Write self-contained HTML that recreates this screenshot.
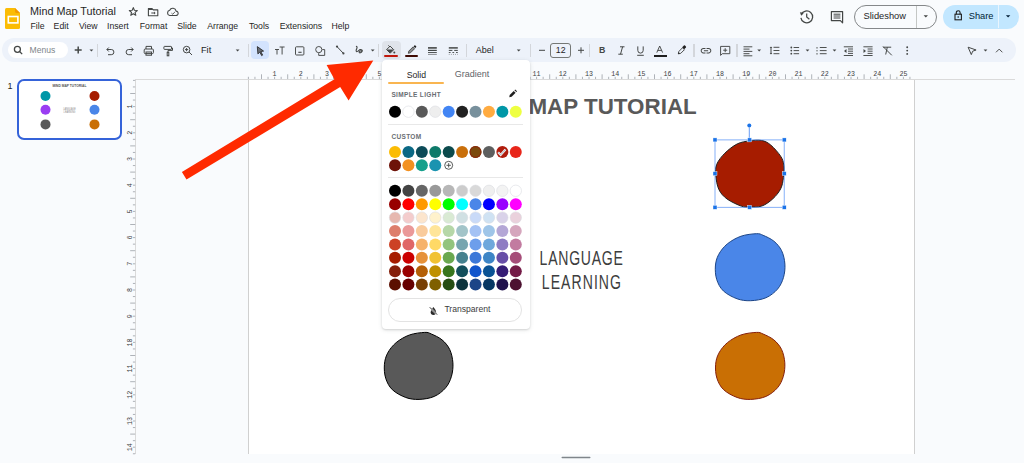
<!DOCTYPE html>
<html><head><meta charset="utf-8"><style>
html,body{margin:0;padding:0;}
body{width:1024px;height:463px;overflow:hidden;position:relative;background:#f9fbfd;font-family:"Liberation Sans", sans-serif;}
.t{position:absolute;white-space:nowrap;}
.ov{position:absolute;left:0;top:0;}
div{position:absolute;}
</style></head><body>
<div class="t" style="left:30.00px;top:5.56px;font-size:10.8px;line-height:10.8px;color:#1f1f1f;font-weight:normal;">Mind Map Tutorial</div>
<div class="t" style="left:30.50px;top:21.94px;font-size:8.7px;line-height:8.7px;color:#1f1f1f;font-weight:normal;">File</div>
<div class="t" style="left:53.60px;top:21.94px;font-size:8.7px;line-height:8.7px;color:#1f1f1f;font-weight:normal;">Edit</div>
<div class="t" style="left:78.90px;top:21.94px;font-size:8.7px;line-height:8.7px;color:#1f1f1f;font-weight:normal;">View</div>
<div class="t" style="left:107.00px;top:21.94px;font-size:8.7px;line-height:8.7px;color:#1f1f1f;font-weight:normal;">Insert</div>
<div class="t" style="left:139.80px;top:21.94px;font-size:8.7px;line-height:8.7px;color:#1f1f1f;font-weight:normal;">Format</div>
<div class="t" style="left:177.30px;top:21.94px;font-size:8.7px;line-height:8.7px;color:#1f1f1f;font-weight:normal;">Slide</div>
<div class="t" style="left:207.20px;top:21.94px;font-size:8.7px;line-height:8.7px;color:#1f1f1f;font-weight:normal;">Arrange</div>
<div class="t" style="left:248.90px;top:21.94px;font-size:8.7px;line-height:8.7px;color:#1f1f1f;font-weight:normal;">Tools</div>
<div class="t" style="left:279.70px;top:21.94px;font-size:8.7px;line-height:8.7px;color:#1f1f1f;font-weight:normal;">Extensions</div>
<div class="t" style="left:331.50px;top:21.94px;font-size:8.7px;line-height:8.7px;color:#1f1f1f;font-weight:normal;">Help</div>
<div style="position:absolute;left:853.8px;top:4.8px;width:83.2px;height:23.8px;border:1px solid #85888a;border-radius:12.5px;box-sizing:border-box"></div>
<div style="position:absolute;left:915.80px;top:5.50px;width:1.00px;height:22.80px;background:#c4c7c5"></div>
<div class="t" style="left:863.60px;top:11.93px;font-size:9.3px;line-height:9.3px;color:#1f1f1f;font-weight:normal;">Slideshow</div>
<div style="position:absolute;left:942.6px;top:4.8px;width:76px;height:24px;background:#c2e7ff;border-radius:12.5px"></div>
<div style="position:absolute;left:997.80px;top:5.00px;width:1.00px;height:23.20px;background:#f9fbfd;opacity:.7"></div>
<div class="t" style="left:968.70px;top:11.93px;font-size:9.3px;line-height:9.3px;color:#001d35;font-weight:normal;">Share</div>
<div style="position:absolute;left:2px;top:38px;width:1014px;height:24px;background:#edf2fa;border-radius:12px"></div>
<div style="position:absolute;left:7.8px;top:42px;width:60.5px;height:16px;background:#fff;border-radius:8px"></div>
<div class="t" style="left:29.50px;top:46.12px;font-size:8.6px;line-height:8.6px;color:#80868b;font-weight:normal;">Menus</div>
<div style="position:absolute;left:96.90px;top:43.50px;width:1.20px;height:13.00px;background:#d3d6db"></div>
<div class="t" style="left:201.00px;top:45.71px;font-size:9.2px;line-height:9.2px;color:#1f1f1f;font-weight:normal;">Fit</div>
<div style="position:absolute;left:247.70px;top:43.50px;width:1.20px;height:13.00px;background:#d3d6db"></div>
<div style="position:absolute;left:251.4px;top:41.2px;width:17.8px;height:18px;background:#d3e3fd;border-radius:4px"></div>
<div style="position:absolute;left:378.20px;top:43.50px;width:1.20px;height:13.00px;background:#d3d6db"></div>
<div style="position:absolute;left:382px;top:41px;width:19px;height:17.7px;background:#dfe3ea;border-radius:4px"></div>
<div style="position:absolute;left:384.40px;top:55.00px;width:13.40px;height:2.20px;background:#c0180c;border-radius:1.1px"></div>
<div style="position:absolute;left:405.10px;top:55.00px;width:12.90px;height:2.20px;background:#3d0a03;border-radius:1.1px"></div>
<div style="position:absolute;left:465.90px;top:43.50px;width:1.20px;height:13.00px;background:#d3d6db"></div>
<div class="t" style="left:475.80px;top:45.88px;font-size:9px;line-height:9px;color:#1f1f1f;font-weight:normal;">Abel</div>
<div style="position:absolute;left:529.70px;top:43.50px;width:1.20px;height:13.00px;background:#d3d6db"></div>
<div style="position:absolute;left:550px;top:43px;width:20.5px;height:14.7px;border:1px solid #747775;border-radius:3px;box-sizing:border-box"></div>
<div class="t" style="left:555.80px;top:46.15px;font-size:8.8px;line-height:8.8px;color:#1f1f1f;font-weight:normal;">12</div>
<div style="position:absolute;left:589.00px;top:43.50px;width:1.20px;height:13.00px;background:#d3d6db"></div>
<div class="t" style="left:599.00px;top:46.05px;font-size:8.8px;line-height:8.8px;color:#444746;font-weight:bold;">B</div>
<div style="position:absolute;left:654.00px;top:54.60px;width:13.30px;height:2.20px;background:#1f1f1f"></div>
<div style="position:absolute;left:693.40px;top:43.50px;width:1.20px;height:13.00px;background:#d3d6db"></div>
<div style="position:absolute;left:736.40px;top:43.50px;width:1.20px;height:13.00px;background:#d3d6db"></div>
<svg class="ov" width="1024" height="463" viewBox="0 0 1024 463"><path d="M5 9.5a1.5 1.5 0 0 1 1.5-1.5H15l5 5v14.5a1.5 1.5 0 0 1-1.5 1.5h-12A1.5 1.5 0 0 1 5 27.5z" fill="#fbbc04"/><path d="M15 8l5 5h-3.6a1.4 1.4 0 0 1-1.4-1.4z" fill="#f29900"/><rect x="8.3" y="16.5" width="9.6" height="6.4" fill="none" stroke="#fff" stroke-width="1.6"/><path d="M133.3 7.6l1.1 2.7 2.9.2-2.2 1.9.7 2.9-2.5-1.6-2.5 1.6.7-2.9-2.2-1.9 2.9-.2z" fill="none" stroke="#444746" stroke-width="1.1" stroke-linejoin="round"/><path d="M148.4 8.5h3.6l1.3 1.4h4.5v5.8h-9.4z" fill="none" stroke="#444746" stroke-width="1.1" stroke-linejoin="round"/><path d="M148.4 8.5h3.6l1.3 1.4h-4.9z" fill="#444746"/><path d="M151.3 13h3" stroke="#444746" stroke-width="1"/><path d="M154 11.6l1.6 1.4-1.6 1.4z" fill="#444746"/><path d="M169.8 15.5h6a2.2 2.2 0 0 0 .3-4.4 3.4 3.4 0 0 0-6.4-.9 2.7 2.7 0 0 0 .1 5.3z" fill="none" stroke="#444746" stroke-width="1.1"/><path d="M171.5 13.2l1.2 1 2.2-2.2" fill="none" stroke="#444746" stroke-width="0.9"/><g fill="none" stroke="#444746" stroke-width="1.25"><path d="M801.3 14.6a5.9 5.9 0 1 1-.4 3.2"/><path d="M806.7 13.4V17l2.7 2.2"/></g><path d="M799.9 12.2l4.1 .5-2.7 3.1z" fill="#444746"/><path d="M831.4 11.6h11.2v11.2l-2.2-2.2h-9z" fill="none" stroke="#444746" stroke-width="1.2" stroke-linejoin="round"/><path d="M833.6 14.2h6.8M833.6 16h6.8M833.6 18h6.8" stroke="#444746" stroke-width="1"/><path d="M923.6 15.2h4.4l-2.2 2.3z" fill="#444746"/><g fill="none" stroke="#1f1f1f" stroke-width="1.1"><rect x="955" y="14.2" width="6.4" height="5.6"/><path d="M956.3 14.2v-1.6a1.9 1.9 0 0 1 3.8 0v1.6"/></g><circle cx="958.2" cy="17" r=".8" fill="#1f1f1f"/><path d="M1005.9 15.2h4.4l-2.2 2.3z" fill="#001d35"/><g fill="none" stroke="#444746" stroke-width="1.3"><circle cx="17.4" cy="49.3" r="3"/><path d="M19.6 51.5l2.6 2.6"/></g><path d="M78.2 46.6v7M74.7 50.1h7" stroke="#444746" stroke-width="1.5"/><path d="M89.50 49.50h3.8l-1.9 2z" fill="#444746"/><g fill="none" stroke="#444746" stroke-width="1.0"><path d="M107 49.5h4.3a2.6 2.6 0 0 1 0 5.2H108"/><path d="M108.8 47.5l-2 2 2 2"/></g><g fill="none" stroke="#444746" stroke-width="1.0"><path d="M133 49.5h-4.3a2.6 2.6 0 0 0 0 5.2H132"/><path d="M131.2 47.5l2 2-2 2"/></g><g fill="none" stroke="#444746" stroke-width="1.0"><path d="M146 49v-2.6h5.5V49"/><rect x="144.2" y="49" width="9.2" height="4.6" rx="1"/><rect x="146" y="52" width="5.5" height="3.2"/></g><g fill="none" stroke="#444746" stroke-width="1.0"><rect x="163.9" y="46.4" width="7.6" height="3" rx=".6"/><path d="M171.5 48h1v2.4h-4.5v2"/><rect x="167.2" y="52.3" width="1.6" height="3.5"/></g><g fill="none" stroke="#444746" stroke-width="1.0"><circle cx="186.6" cy="49.6" r="3.3"/><path d="M189 52l3 3M186.6 48v3.2M185 49.6h3.2"/></g><path d="M235.70 49.50h3.8l-1.9 2z" fill="#444746"/><path d="M257.3 46.6L263.6 51.1L260.8 51.5L262.6 55.1L261.7 55.7L259.8 52.1L257.9 53.9Z" fill="#6b6f75" stroke="#1f1f1f" stroke-width=".8" stroke-linejoin="round"/><path d="M275 49.5h4M277 49.5v5M279.6 47h5M282.1 47v7.5" stroke="#444746" stroke-width="0.95"/><rect x="295.5" y="46.8" width="8.4" height="8.2" rx=".9" fill="none" stroke="#444746" stroke-width="0.95"/><path d="M298.3 52.3h3.3" stroke="#444746" stroke-width="1.1"/><g fill="none" stroke="#444746" stroke-width="0.95"><circle cx="318.8" cy="49.6" r="3.1"/><path d="M322.3 49.6h2.4v5.8h-6v-2.2"/></g><path d="M337 46.6l6.4 6.8" stroke="#444746" stroke-width="1"/><circle cx="337" cy="46.6" r="1.1" fill="#444746"/><circle cx="343.4" cy="53.4" r="1.1" fill="#444746"/><path d="M356.4 46.4c.9.2.8 1.3.3 2.4-.6 1.3-.9 2.6 0 2.8 1 .2 2.1-1.5 3.3-2 1.4-.5 2.9.5 2.1 1.8-.9 1.4-2.7 2-3 .8-.3-1.1 1.6-1.8 2.9-1" fill="none" stroke="#444746" stroke-width="1.1" stroke-linecap="round"/><path d="M370.80 49.50h3.8l-1.9 2z" fill="#444746"/><path d="M388.4 45.4l1.6 1.6" stroke="#444746" stroke-width="1"/><path d="M386.6 49.6l3.5-3.5 3.6 3.6-3.5 3.5z" fill="none" stroke="#444746" stroke-width="1"/><path d="M386.6 49.6h7.1l-3.5 3.5z" fill="#444746"/><circle cx="394.3" cy="52.6" r="1" fill="#444746"/><path d="M408.3 53.3l.5-2.2 4.1-4.1 1.7 1.7-4.1 4.1z" fill="#8a8c8e" stroke="#3c3c3c" stroke-width=".8" stroke-linejoin="round"/><path d="M413.5 46.4l.9-.9a.7.7 0 0 1 1 0l.7.7a.7.7 0 0 1 0 1l-.9.9z" fill="#1f1f1f"/><path d="M428 47.9h8.8" stroke="#444746" stroke-width="1.6"/><path d="M428 50.4h8.8" stroke="#444746" stroke-width="1.2"/><path d="M428 52.5h8.8" stroke="#444746" stroke-width=".9"/><path d="M428 54.4h8.8" stroke="#444746" stroke-width=".6"/><path d="M448.8 47.9h9" stroke="#444746" stroke-width="1.5"/><path d="M448.8 50.4h3.6M454.2 50.4h3.6" stroke="#444746" stroke-width="1"/><path d="M448.8 52.5h1.8M452.4 52.5h1.8M456 52.5h1.8" stroke="#444746" stroke-width=".9"/><path d="M448.8 54.4h.8M450.9 54.4h.8M453 54.4h.8M455.1 54.4h.8M457.2 54.4h.6" stroke="#444746" stroke-width=".6"/><path d="M516.80 49.50h3.8l-1.9 2z" fill="#444746"/><path d="M539 50.3h6" stroke="#444746" stroke-width="1.0"/><path d="M578 50.3h6M581 47.3v6" stroke="#444746" stroke-width="1.0"/><path d="M620 46.8h4.5M618.3 54.2h4.5M622.6 46.8l-2.1 7.4" stroke="#444746" stroke-width="1.0"/><path d="M637.8 46.4v4a2.7 2.7 0 0 0 5.4 0v-4" fill="none" stroke="#444746" stroke-width="1.0"/><path d="M637.2 55.3h6.6" stroke="#444746" stroke-width="1"/><path d="M656.8 52.6l2.9-6.6 2.9 6.6M657.8 50.4h3.9" fill="none" stroke="#444746" stroke-width="0.95"/><path d="M678.3 53.9l.6-2.5 3.6-3.6 1.9 1.9-3.6 3.6z" fill="none" stroke="#444746" stroke-width="0.95" stroke-linejoin="round"/><path d="M682.2 47.3l1.7-1.7a.8.8 0 0 1 1.1 0l.9.9a.8.8 0 0 1 0 1.1l-1.7 1.7z" fill="#1f1f1f"/><path d="M678.6 52.2l1.3 1.3-1.8.5z" fill="#1f1f1f"/><path transform="translate(699.64 44.4) scale(0.53)" d="M3.9 12c0-1.71 1.39-3.1 3.1-3.1h4V7H7c-2.76 0-5 2.240-5 5s2.24 5 5 5h4v-1.9H7c-1.71 0-3.1-1.39-3.1-3.1zM8 13h8v-2H8v2zm9-6h-4v1.9h4c1.71 0 3.1 1.39 3.1 3.1s-1.39 3.1-3.1 3.1h-4V17h4c2.76 0 5-2.24 5-5s-2.24-5-5-5z" fill="#444746"/><path d="M720.6 46.4h9.2v7.3h-7.5l-1.7 1.7z" fill="none" stroke="#444746" stroke-width="0.95"/><path d="M725.2 48.2v4M723.2 50.2h4" stroke="#444746" stroke-width="0.95"/><path d="M743.5 46.8h8.8M743.5 49.1h6M743.5 51.4h8.8M743.5 53.7h6M743.5 55.8h8.8" stroke="#444746" stroke-width="0.95"/><path d="M757.30 49.50h3.8l-1.9 2z" fill="#444746"/><path d="M773.5 47.3h5.9M773.5 50.5h5.9M773.5 53.7h5.9" stroke="#444746" stroke-width="0.95"/><path d="M771 47.3v6.4" stroke="#444746" stroke-width="1"/><path d="M769.7 48l1.3-1.6 1.3 1.6zM769.7 53l1.3 1.6 1.3-1.6z" fill="#444746"/><g fill="#444746"><circle cx="791.3" cy="47.5" r=".9"/><circle cx="791.3" cy="50.6" r=".9"/><circle cx="791.3" cy="53.7" r=".9"/></g><path d="M793.6 47.5h5.5M793.6 50.6h5.5M793.6 53.7h5.5" stroke="#444746" stroke-width="0.95"/><path d="M805.60 49.50h3.8l-1.9 2z" fill="#444746"/><path d="M817 47v1.6M817 50v1.4M817 53v1.6" stroke="#444746" stroke-width=".9"/><path d="M819.8 47.5h6.8M819.8 50.6h6.8M819.8 53.7h6.8" stroke="#444746" stroke-width="0.95"/><path d="M832.60 49.50h3.8l-1.9 2z" fill="#444746"/><path d="M843.8 46.8h9.2M848 49h5M848 51.2h5M848 53.4h5M843.8 55.5h9.2" stroke="#444746" stroke-width="0.95"/><path d="M846.5 49.1l-2.5 2 2.5 2z" fill="#444746"/><path d="M863.4 46.8h9.2M867.6 49h5M867.6 51.2h5M867.6 53.4h5M863.4 55.5h9.2" stroke="#444746" stroke-width="0.95"/><path d="M863.5 49.1l2.5 2-2.5 2z" fill="#444746"/><path d="M883.2 47.2h8M887.3 47.2l-1.6 7.3M883 46.5l8.8 8.8" stroke="#444746" stroke-width="1.0"/><g fill="#444746"><circle cx="907.2" cy="47.3" r=".95"/><circle cx="907.2" cy="50.6" r=".95"/><circle cx="907.2" cy="53.9" r=".95"/></g><path d="M968.1 47.2l8 2.8-3.4 1.2-1.4 3.4z" fill="none" stroke="#444746" stroke-width="1.0" stroke-linejoin="round"/><path d="M983.60 49.50h3.8l-1.9 2z" fill="#444746"/><path d="M996 52.3l3.2-3.2 3.2 3.2" fill="none" stroke="#444746" stroke-width="0.95"/></svg>
<div class="t" style="left:7.40px;top:81.58px;font-size:9px;line-height:9px;color:#1f1f1f;font-weight:normal;">1</div>
<div style="position:absolute;left:17.3px;top:79px;width:104.5px;height:61px;border:2px solid #3563d9;border-radius:7px;box-sizing:border-box;background:#fff"></div>
<div style="position:absolute;left:135.20px;top:78.60px;width:880.30px;height:1.00px;background:#dadada"></div>
<div style="position:absolute;left:135.20px;top:79.00px;width:1.00px;height:375.00px;background:#dadada"></div>
<div style="position:absolute;left:248px;top:79.5px;width:666.5px;height:374.3px;background:#fff;border-left:1px solid #d0d0d0;border-right:1px solid #d0d0d0;box-sizing:border-box"></div>
<svg class="ov" width="1024" height="463" viewBox="0 0 1024 463"><g><circle cx="45.5" cy="96" r="5" fill="#0097a7"/><circle cx="94.5" cy="96" r="5" fill="#a61c00"/><circle cx="45.5" cy="109.7" r="5" fill="#9a3df2"/><circle cx="94.5" cy="109.7" r="5" fill="#4a86e8"/><circle cx="45.5" cy="124.4" r="5" fill="#595959"/><circle cx="94.5" cy="124.4" r="5" fill="#c96f04"/><text x="69.4" y="86.6" font-size="3.1" font-weight="bold" text-anchor="middle" fill="#555" font-family="Liberation Sans" textLength="34" lengthAdjust="spacingAndGlyphs">MIND MAP TUTORIAL</text><text x="69.5" y="109.6" font-size="2.7" text-anchor="middle" fill="#8a8a8a" font-family="Liberation Sans" textLength="12.5" lengthAdjust="spacingAndGlyphs">LANGUAGE</text><text x="69.5" y="112.9" font-size="2.7" text-anchor="middle" fill="#8a8a8a" font-family="Liberation Sans" textLength="11.8" lengthAdjust="spacingAndGlyphs">LEARNING</text></g><path d="M248.40 79v-2.2M254.95 79v-2.2M261.50 79v-4.7M268.05 79v-2.2M274.60 79v-2.2M281.15 79v-2.2M287.70 79v-4.7M294.25 79v-2.2M300.80 79v-2.2M307.35 79v-2.2M313.90 79v-4.7M320.45 79v-2.2M327.00 79v-2.2M333.55 79v-2.2M340.10 79v-4.7M346.65 79v-2.2M353.20 79v-2.2M359.75 79v-2.2M366.30 79v-4.7M372.85 79v-2.2M379.40 79v-2.2M385.95 79v-2.2M392.50 79v-4.7M399.05 79v-2.2M405.60 79v-2.2M412.15 79v-2.2M418.70 79v-4.7M425.25 79v-2.2M431.80 79v-2.2M438.35 79v-2.2M444.90 79v-4.7M451.45 79v-2.2M458.00 79v-2.2M464.55 79v-2.2M471.10 79v-4.7M477.65 79v-2.2M484.20 79v-2.2M490.75 79v-2.2M497.30 79v-4.7M503.85 79v-2.2M510.40 79v-2.2M516.95 79v-2.2M523.50 79v-4.7M530.05 79v-2.2M536.60 79v-2.2M543.15 79v-2.2M549.70 79v-4.7M556.25 79v-2.2M562.80 79v-2.2M569.35 79v-2.2M575.90 79v-4.7M582.45 79v-2.2M589.00 79v-2.2M595.55 79v-2.2M602.10 79v-4.7M608.65 79v-2.2M615.20 79v-2.2M621.75 79v-2.2M628.30 79v-4.7M634.85 79v-2.2M641.40 79v-2.2M647.95 79v-2.2M654.50 79v-4.7M661.05 79v-2.2M667.60 79v-2.2M674.15 79v-2.2M680.70 79v-4.7M687.25 79v-2.2M693.80 79v-2.2M700.35 79v-2.2M706.90 79v-4.7M713.45 79v-2.2M720.00 79v-2.2M726.55 79v-2.2M733.10 79v-4.7M739.65 79v-2.2M746.20 79v-2.2M752.75 79v-2.2M759.30 79v-4.7M765.85 79v-2.2M772.40 79v-2.2M778.95 79v-2.2M785.50 79v-4.7M792.05 79v-2.2M798.60 79v-2.2M805.15 79v-2.2M811.70 79v-4.7M818.25 79v-2.2M824.80 79v-2.2M831.35 79v-2.2M837.90 79v-4.7M844.45 79v-2.2M851.00 79v-2.2M857.55 79v-2.2M864.10 79v-4.7M870.65 79v-2.2M877.20 79v-2.2M883.75 79v-2.2M890.30 79v-4.7M896.85 79v-2.2M903.40 79v-2.2M909.95 79v-2.2" stroke="#9aa0a6" stroke-width=".8"/><text x="274.60" y="75.7" font-size="7" text-anchor="middle" fill="#3c4043" font-family="Liberation Mono" font-weight="normal" textLength="4.0" lengthAdjust="spacingAndGlyphs">1</text><text x="300.80" y="75.7" font-size="7" text-anchor="middle" fill="#3c4043" font-family="Liberation Mono" font-weight="normal" textLength="4.0" lengthAdjust="spacingAndGlyphs">2</text><text x="327.00" y="75.7" font-size="7" text-anchor="middle" fill="#3c4043" font-family="Liberation Mono" font-weight="normal" textLength="4.0" lengthAdjust="spacingAndGlyphs">3</text><text x="353.20" y="75.7" font-size="7" text-anchor="middle" fill="#3c4043" font-family="Liberation Mono" font-weight="normal" textLength="4.0" lengthAdjust="spacingAndGlyphs">4</text><text x="379.40" y="75.7" font-size="7" text-anchor="middle" fill="#3c4043" font-family="Liberation Mono" font-weight="normal" textLength="4.0" lengthAdjust="spacingAndGlyphs">5</text><text x="405.60" y="75.7" font-size="7" text-anchor="middle" fill="#3c4043" font-family="Liberation Mono" font-weight="normal" textLength="4.0" lengthAdjust="spacingAndGlyphs">6</text><text x="431.80" y="75.7" font-size="7" text-anchor="middle" fill="#3c4043" font-family="Liberation Mono" font-weight="normal" textLength="4.0" lengthAdjust="spacingAndGlyphs">7</text><text x="458.00" y="75.7" font-size="7" text-anchor="middle" fill="#3c4043" font-family="Liberation Mono" font-weight="normal" textLength="4.0" lengthAdjust="spacingAndGlyphs">8</text><text x="484.20" y="75.7" font-size="7" text-anchor="middle" fill="#3c4043" font-family="Liberation Mono" font-weight="normal" textLength="4.0" lengthAdjust="spacingAndGlyphs">9</text><text x="510.40" y="75.7" font-size="7" text-anchor="middle" fill="#3c4043" font-family="Liberation Mono" font-weight="normal" textLength="8.0" lengthAdjust="spacingAndGlyphs">10</text><text x="536.60" y="75.7" font-size="7" text-anchor="middle" fill="#3c4043" font-family="Liberation Mono" font-weight="normal" textLength="8.0" lengthAdjust="spacingAndGlyphs">11</text><text x="562.80" y="75.7" font-size="7" text-anchor="middle" fill="#3c4043" font-family="Liberation Mono" font-weight="normal" textLength="8.0" lengthAdjust="spacingAndGlyphs">12</text><text x="589.00" y="75.7" font-size="7" text-anchor="middle" fill="#3c4043" font-family="Liberation Mono" font-weight="normal" textLength="8.0" lengthAdjust="spacingAndGlyphs">13</text><text x="615.20" y="75.7" font-size="7" text-anchor="middle" fill="#3c4043" font-family="Liberation Mono" font-weight="normal" textLength="8.0" lengthAdjust="spacingAndGlyphs">14</text><text x="641.40" y="75.7" font-size="7" text-anchor="middle" fill="#3c4043" font-family="Liberation Mono" font-weight="normal" textLength="8.0" lengthAdjust="spacingAndGlyphs">15</text><text x="667.60" y="75.7" font-size="7" text-anchor="middle" fill="#3c4043" font-family="Liberation Mono" font-weight="normal" textLength="8.0" lengthAdjust="spacingAndGlyphs">16</text><text x="693.80" y="75.7" font-size="7" text-anchor="middle" fill="#3c4043" font-family="Liberation Mono" font-weight="normal" textLength="8.0" lengthAdjust="spacingAndGlyphs">17</text><text x="720.00" y="75.7" font-size="7" text-anchor="middle" fill="#3c4043" font-family="Liberation Mono" font-weight="normal" textLength="8.0" lengthAdjust="spacingAndGlyphs">18</text><text x="746.20" y="75.7" font-size="7" text-anchor="middle" fill="#3c4043" font-family="Liberation Mono" font-weight="normal" textLength="8.0" lengthAdjust="spacingAndGlyphs">19</text><text x="772.40" y="75.7" font-size="7" text-anchor="middle" fill="#3c4043" font-family="Liberation Mono" font-weight="normal" textLength="8.0" lengthAdjust="spacingAndGlyphs">20</text><text x="798.60" y="75.7" font-size="7" text-anchor="middle" fill="#3c4043" font-family="Liberation Mono" font-weight="normal" textLength="8.0" lengthAdjust="spacingAndGlyphs">21</text><text x="824.80" y="75.7" font-size="7" text-anchor="middle" fill="#3c4043" font-family="Liberation Mono" font-weight="normal" textLength="8.0" lengthAdjust="spacingAndGlyphs">22</text><text x="851.00" y="75.7" font-size="7" text-anchor="middle" fill="#3c4043" font-family="Liberation Mono" font-weight="normal" textLength="8.0" lengthAdjust="spacingAndGlyphs">23</text><text x="877.20" y="75.7" font-size="7" text-anchor="middle" fill="#3c4043" font-family="Liberation Mono" font-weight="normal" textLength="8.0" lengthAdjust="spacingAndGlyphs">24</text><text x="903.40" y="75.7" font-size="7" text-anchor="middle" fill="#3c4043" font-family="Liberation Mono" font-weight="normal" textLength="8.0" lengthAdjust="spacingAndGlyphs">25</text><path d="M135.2 80.40h-2.2M135.2 86.95h-2.3M135.2 93.50h-5.0M135.2 100.05h-2.3M135.2 106.60h-2.2M135.2 113.15h-2.3M135.2 119.70h-5.0M135.2 126.25h-2.3M135.2 132.80h-2.2M135.2 139.35h-2.3M135.2 145.90h-5.0M135.2 152.45h-2.3M135.2 159.00h-2.2M135.2 165.55h-2.3M135.2 172.10h-5.0M135.2 178.65h-2.3M135.2 185.20h-2.2M135.2 191.75h-2.3M135.2 198.30h-5.0M135.2 204.85h-2.3M135.2 211.40h-2.2M135.2 217.95h-2.3M135.2 224.50h-5.0M135.2 231.05h-2.3M135.2 237.60h-2.2M135.2 244.15h-2.3M135.2 250.70h-5.0M135.2 257.25h-2.3M135.2 263.80h-2.2M135.2 270.35h-2.3M135.2 276.90h-5.0M135.2 283.45h-2.3M135.2 290.00h-2.2M135.2 296.55h-2.3M135.2 303.10h-5.0M135.2 309.65h-2.3M135.2 316.20h-2.2M135.2 322.75h-2.3M135.2 329.30h-5.0M135.2 335.85h-2.3M135.2 342.40h-2.2M135.2 348.95h-2.3M135.2 355.50h-5.0M135.2 362.05h-2.3M135.2 368.60h-2.2M135.2 375.15h-2.3M135.2 381.70h-5.0M135.2 388.25h-2.3M135.2 394.80h-2.2M135.2 401.35h-2.3M135.2 407.90h-5.0M135.2 414.45h-2.3M135.2 421.00h-2.2M135.2 427.55h-2.3M135.2 434.10h-5.0M135.2 440.65h-2.3M135.2 447.20h-2.2M135.2 453.75h-2.3" stroke="#9aa0a6" stroke-width=".8"/><text x="0" y="0" transform="translate(132.2 106.60) rotate(-90)" font-size="7" text-anchor="middle" fill="#3c4043" font-family="Liberation Mono" font-weight="normal" textLength="4.0" lengthAdjust="spacingAndGlyphs">1</text><text x="0" y="0" transform="translate(132.2 132.80) rotate(-90)" font-size="7" text-anchor="middle" fill="#3c4043" font-family="Liberation Mono" font-weight="normal" textLength="4.0" lengthAdjust="spacingAndGlyphs">2</text><text x="0" y="0" transform="translate(132.2 159.00) rotate(-90)" font-size="7" text-anchor="middle" fill="#3c4043" font-family="Liberation Mono" font-weight="normal" textLength="4.0" lengthAdjust="spacingAndGlyphs">3</text><text x="0" y="0" transform="translate(132.2 185.20) rotate(-90)" font-size="7" text-anchor="middle" fill="#3c4043" font-family="Liberation Mono" font-weight="normal" textLength="4.0" lengthAdjust="spacingAndGlyphs">4</text><text x="0" y="0" transform="translate(132.2 211.40) rotate(-90)" font-size="7" text-anchor="middle" fill="#3c4043" font-family="Liberation Mono" font-weight="normal" textLength="4.0" lengthAdjust="spacingAndGlyphs">5</text><text x="0" y="0" transform="translate(132.2 237.60) rotate(-90)" font-size="7" text-anchor="middle" fill="#3c4043" font-family="Liberation Mono" font-weight="normal" textLength="4.0" lengthAdjust="spacingAndGlyphs">6</text><text x="0" y="0" transform="translate(132.2 263.80) rotate(-90)" font-size="7" text-anchor="middle" fill="#3c4043" font-family="Liberation Mono" font-weight="normal" textLength="4.0" lengthAdjust="spacingAndGlyphs">7</text><text x="0" y="0" transform="translate(132.2 290.00) rotate(-90)" font-size="7" text-anchor="middle" fill="#3c4043" font-family="Liberation Mono" font-weight="normal" textLength="4.0" lengthAdjust="spacingAndGlyphs">8</text><text x="0" y="0" transform="translate(132.2 316.20) rotate(-90)" font-size="7" text-anchor="middle" fill="#3c4043" font-family="Liberation Mono" font-weight="normal" textLength="4.0" lengthAdjust="spacingAndGlyphs">9</text><text x="0" y="0" transform="translate(132.2 342.40) rotate(-90)" font-size="7" text-anchor="middle" fill="#3c4043" font-family="Liberation Mono" font-weight="normal" textLength="8.0" lengthAdjust="spacingAndGlyphs">10</text><text x="0" y="0" transform="translate(132.2 368.60) rotate(-90)" font-size="7" text-anchor="middle" fill="#3c4043" font-family="Liberation Mono" font-weight="normal" textLength="8.0" lengthAdjust="spacingAndGlyphs">11</text><text x="0" y="0" transform="translate(132.2 394.80) rotate(-90)" font-size="7" text-anchor="middle" fill="#3c4043" font-family="Liberation Mono" font-weight="normal" textLength="8.0" lengthAdjust="spacingAndGlyphs">12</text><text x="0" y="0" transform="translate(132.2 421.00) rotate(-90)" font-size="7" text-anchor="middle" fill="#3c4043" font-family="Liberation Mono" font-weight="normal" textLength="8.0" lengthAdjust="spacingAndGlyphs">13</text><text x="0" y="0" transform="translate(132.2 447.20) rotate(-90)" font-size="7" text-anchor="middle" fill="#3c4043" font-family="Liberation Mono" font-weight="normal" textLength="8.0" lengthAdjust="spacingAndGlyphs">14</text><rect x="561.5" y="456.8" width="29" height="1.5" rx=".7" fill="#80868b"/><text x="580.9" y="114" font-size="22.4" font-weight="bold" text-anchor="middle" fill="#595959" font-family="Liberation Sans">MIND MAP TUTORIAL</text><path d="M749.46 140.90C753.54 140.32 758.10 139.82 761.64 140.50C765.17 141.18 767.50 142.34 770.67 144.96C773.84 147.58 778.46 152.84 780.65 156.22C782.84 159.59 783.34 161.63 783.80 165.21C784.26 168.78 783.91 173.72 783.39 177.66C782.87 181.60 782.44 185.30 780.65 188.85C778.86 192.40 775.82 196.10 772.65 198.97C769.48 201.85 765.50 204.78 761.64 206.10C757.77 207.42 752.86 206.90 749.46 206.90C746.07 206.90 744.99 207.42 741.26 206.10C737.52 204.78 730.76 201.74 727.03 198.97C723.30 196.21 720.76 193.44 718.89 189.52C717.02 185.60 716.16 179.67 715.81 175.46C715.46 171.26 715.25 167.99 716.77 164.28C718.28 160.56 721.51 156.54 724.91 153.15C728.30 149.77 733.06 146.01 737.15 143.96C741.24 141.92 745.38 141.48 749.46 140.90Z" fill="#a61c00" stroke="#202020" stroke-width="1"/><path d="M756.34 233.70C760.03 233.54 760.16 234.07 763.08 235.31C766.00 236.55 770.76 238.57 773.85 241.14C776.94 243.71 779.79 246.89 781.63 250.72C783.48 254.55 784.60 259.64 784.90 264.12C785.20 268.60 784.67 273.42 783.44 277.58C782.21 281.75 780.45 285.75 777.53 289.11C774.61 292.47 770.42 295.82 765.93 297.75C761.43 299.68 755.39 300.53 750.57 300.70C745.75 300.87 741.53 300.38 737.01 298.76C732.50 297.14 726.84 294.19 723.46 290.99C720.08 287.78 718.06 283.69 716.72 279.53C715.38 275.36 715.08 270.17 715.40 265.99C715.72 261.82 716.69 258.14 718.67 254.47C720.65 250.80 723.58 246.99 727.28 243.95C730.99 240.91 736.06 237.95 740.91 236.25C745.75 234.54 752.64 233.86 756.34 233.70Z" fill="#4a86e8" stroke="#1c4587" stroke-width="1"/><path d="M756.36 332.40C760.04 332.24 760.16 332.77 763.07 334.01C765.98 335.25 770.72 337.27 773.80 339.84C776.88 342.41 779.71 345.59 781.55 349.42C783.38 353.25 784.50 358.34 784.80 362.82C785.10 367.30 784.57 372.12 783.35 376.28C782.12 380.45 780.37 384.45 777.46 387.81C774.56 391.17 770.38 394.52 765.91 396.45C761.43 398.38 755.41 399.23 750.62 399.40C745.82 399.57 741.62 399.08 737.12 397.46C732.62 395.84 726.99 392.89 723.63 389.68C720.26 386.48 718.25 382.39 716.91 378.23C715.58 374.06 715.28 368.87 715.60 364.69C715.92 360.52 716.88 356.84 718.85 353.17C720.82 349.50 723.74 345.69 727.43 342.65C731.12 339.61 736.18 336.65 741.00 334.95C745.82 333.24 752.68 332.56 756.36 332.40Z" fill="#c96f04" stroke="#85200c" stroke-width="1"/><path d="M424.75 332.40C428.39 332.24 428.51 332.77 431.39 334.01C434.27 335.25 438.96 337.27 442.01 339.84C445.06 342.41 447.87 345.59 449.68 349.42C451.50 353.25 452.60 358.34 452.90 362.82C453.20 367.30 452.67 372.12 451.46 376.28C450.25 380.45 448.52 384.45 445.64 387.81C442.76 391.17 438.63 394.52 434.20 396.45C429.77 398.38 423.81 399.23 419.06 399.40C414.31 399.57 410.16 399.08 405.70 397.46C401.25 395.84 395.68 392.89 392.35 389.68C389.01 386.48 387.03 382.39 385.70 378.23C384.38 374.06 384.08 368.87 384.40 364.69C384.72 360.52 385.67 356.84 387.62 353.17C389.57 349.50 392.46 345.69 396.11 342.65C399.77 339.61 404.77 336.65 409.54 334.95C414.31 333.24 421.10 332.56 424.75 332.40Z" fill="#595959" stroke="#000" stroke-width="1"/><path d="M424.75 140.30C428.39 140.14 428.51 140.67 431.39 141.90C434.27 143.13 438.96 145.14 442.01 147.69C445.06 150.25 447.87 153.41 449.68 157.22C451.50 161.02 452.60 166.09 452.90 170.54C453.20 174.99 452.67 179.78 451.46 183.92C450.25 188.06 448.52 192.04 445.64 195.38C442.76 198.72 438.63 202.05 434.20 203.97C429.77 205.89 423.81 206.73 419.06 206.90C414.31 207.07 410.16 206.58 405.70 204.97C401.25 203.36 395.68 200.43 392.35 197.24C389.01 194.06 387.03 189.99 385.70 185.85C384.38 181.71 384.08 176.55 384.40 172.40C384.72 168.25 385.67 164.60 387.62 160.95C389.57 157.29 392.46 153.51 396.11 150.49C399.77 147.47 404.77 144.53 409.54 142.83C414.31 141.13 421.10 140.46 424.75 140.30Z" fill="#0097a7" stroke="#000" stroke-width="1"/><path d="M424.75 233.70C428.39 233.54 428.51 234.07 431.39 235.31C434.27 236.55 438.96 238.57 442.01 241.14C445.06 243.71 447.87 246.89 449.68 250.72C451.50 254.55 452.60 259.64 452.90 264.12C453.20 268.60 452.67 273.42 451.46 277.58C450.25 281.75 448.52 285.75 445.64 289.11C442.76 292.47 438.63 295.82 434.20 297.75C429.77 299.68 423.81 300.53 419.06 300.70C414.31 300.87 410.16 300.38 405.70 298.76C401.25 297.14 395.68 294.19 392.35 290.99C389.01 287.78 387.03 283.69 385.70 279.53C384.38 275.36 384.08 270.17 384.40 265.99C384.72 261.82 385.67 258.14 387.62 254.47C389.57 250.80 392.46 246.99 396.11 243.95C399.77 240.91 404.77 237.95 409.54 236.25C414.31 234.54 421.10 233.86 424.75 233.70Z" fill="#9334e6" stroke="#000" stroke-width="1"/><rect x="715" y="139.9" width="69.2" height="67.4" fill="none" stroke="#4285f4" stroke-width=".8" opacity=".8"/><path d="M749.3 127.5V139.9" stroke="#4285f4" stroke-width=".8"/><circle cx="749.3" cy="125.6" r="2" fill="#1a73e8"/><rect x="713.00" y="137.90" width="4" height="4" fill="#1a73e8" stroke="#fff" stroke-width=".4"/><rect x="713.00" y="171.60" width="4" height="4" fill="#1a73e8" stroke="#fff" stroke-width=".4"/><rect x="713.00" y="205.30" width="4" height="4" fill="#1a73e8" stroke="#fff" stroke-width=".4"/><rect x="747.60" y="137.90" width="4" height="4" fill="#1a73e8" stroke="#fff" stroke-width=".4"/><rect x="747.60" y="205.30" width="4" height="4" fill="#1a73e8" stroke="#fff" stroke-width=".4"/><rect x="782.20" y="137.90" width="4" height="4" fill="#1a73e8" stroke="#fff" stroke-width=".4"/><rect x="782.20" y="171.60" width="4" height="4" fill="#1a73e8" stroke="#fff" stroke-width=".4"/><rect x="782.20" y="205.30" width="4" height="4" fill="#1a73e8" stroke="#fff" stroke-width=".4"/><text x="0" y="0" transform="translate(539.6 264.9) scale(0.72 1)" font-size="19.5" letter-spacing="1.05" fill="#3d3d3d" font-family="Liberation Sans">LANGUAGE</text><text x="0" y="0" transform="translate(541.8 289.2) scale(0.72 1)" font-size="19.5" letter-spacing="1.47" fill="#3d3d3d" font-family="Liberation Sans">LEARNING</text></svg>
<div style="position:absolute;left:381.6px;top:59.6px;width:148px;height:269.8px;background:#fff;border-radius:4px;box-shadow:0 1px 2px rgba(60,64,67,.18),0 1px 5px rgba(60,64,67,.1)"></div>
<div class="t" style="left:406.70px;top:70.54px;font-size:8.7px;line-height:8.7px;color:#1f1f1f;font-weight:normal;">Solid</div>
<div class="t" style="left:454.80px;top:70.28px;font-size:9.0px;line-height:9.0px;color:#5f6368;font-weight:normal;">Gradient</div>
<div style="position:absolute;left:388.40px;top:82.10px;width:55.90px;height:1.90px;background:#f9b550;border-radius:1px"></div>
<div class="t" style="left:391.40px;top:92.30px;font-size:6.5px;line-height:6.5px;color:#6a6e73;font-weight:bold;letter-spacing:.35px">SIMPLE LIGHT</div>
<div style="position:absolute;left:388.30px;top:123.60px;width:134.40px;height:0.90px;background:#e8e8e8"></div>
<div class="t" style="left:391.40px;top:134.10px;font-size:6.5px;line-height:6.5px;color:#6a6e73;font-weight:bold;letter-spacing:.35px">CUSTOM</div>
<div style="position:absolute;left:388.30px;top:176.60px;width:134.40px;height:0.90px;background:#e8e8e8"></div>
<div style="position:absolute;left:388.2px;top:298.1px;width:134.3px;height:24.2px;border:1px solid #e3e3e3;border-radius:12.1px;box-sizing:border-box"></div>
<div class="t" style="left:444.40px;top:305.12px;font-size:8.6px;line-height:8.6px;color:#3c3c3c;font-weight:normal;">Transparent</div>
<svg class="ov" width="1024" height="463" viewBox="0 0 1024 463"><path d="M509.3 97.2l.4-2.3 4-4 1.9 1.9-4 4z" fill="#1f1f1f"/><path d="M514.4 90.2l.8-.8 1.9 1.9-.8.8z" fill="#1f1f1f"/><circle cx="395.00" cy="111.70" r="6.00" fill="#000000"/><circle cx="408.42" cy="111.70" r="5.70" fill="#ffffff" stroke="#dadce0" stroke-width=".6"/><circle cx="421.84" cy="111.70" r="6.00" fill="#595959"/><circle cx="435.26" cy="111.70" r="5.70" fill="#eeeeee" stroke="#dadce0" stroke-width=".6"/><circle cx="448.68" cy="111.70" r="6.00" fill="#4285f4"/><circle cx="462.10" cy="111.70" r="6.00" fill="#212121"/><circle cx="475.52" cy="111.70" r="6.00" fill="#78909c"/><circle cx="488.94" cy="111.70" r="6.00" fill="#ffab40"/><circle cx="502.36" cy="111.70" r="6.00" fill="#0097a7"/><circle cx="515.78" cy="111.70" r="6.00" fill="#eeff41"/><circle cx="395.00" cy="152.00" r="6.00" fill="#fbbc04"/><circle cx="408.42" cy="152.00" r="6.00" fill="#0b6884"/><circle cx="421.84" cy="152.00" r="6.00" fill="#0c4b58"/><circle cx="435.26" cy="152.00" r="6.00" fill="#0e7a6a"/><circle cx="448.68" cy="152.00" r="6.00" fill="#0b4a4c"/><circle cx="462.10" cy="152.00" r="6.00" fill="#c96f0a"/><circle cx="475.52" cy="152.00" r="6.00" fill="#7b4a0c"/><circle cx="488.94" cy="152.00" r="6.00" fill="#5d5f5f"/><circle cx="502.36" cy="152.00" r="6.00" fill="#b01c0c"/><circle cx="515.78" cy="152.00" r="6.00" fill="#e8261a"/><circle cx="475.52" cy="152" r="5.4" fill="none" stroke="#8a2a0c" stroke-width="1.1"/><path d="M498.16 152.3l2.5 2.6 4.8-5.3" fill="none" stroke="#f1f3f4" stroke-width="2.2"/><path d="M498.16 152.3l2.5 2.6 4.8-5.3" fill="none" stroke="#aab2bd" stroke-width="0.9"/><circle cx="395.00" cy="165.30" r="6.00" fill="#6e1309"/><circle cx="408.42" cy="165.30" r="6.00" fill="#f39121"/><circle cx="421.84" cy="165.30" r="6.00" fill="#16a08c"/><circle cx="435.26" cy="165.30" r="6.00" fill="#1a93b0"/><circle cx="448.68" cy="165.3" r="4" fill="none" stroke="#444746" stroke-width=".9"/><path d="M446.48 165.3h4.4M448.68 163.1v4.4" stroke="#444746" stroke-width=".9"/><circle cx="395.00" cy="190.80" r="6.00" fill="#000000"/><circle cx="408.42" cy="190.80" r="6.00" fill="#434343"/><circle cx="421.84" cy="190.80" r="6.00" fill="#666666"/><circle cx="435.26" cy="190.80" r="6.00" fill="#999999"/><circle cx="448.68" cy="190.80" r="6.00" fill="#b7b7b7"/><circle cx="462.10" cy="190.80" r="5.70" fill="#cccccc" stroke="#dadce0" stroke-width=".6"/><circle cx="475.52" cy="190.80" r="5.70" fill="#d9d9d9" stroke="#dadce0" stroke-width=".6"/><circle cx="488.94" cy="190.80" r="5.70" fill="#efefef" stroke="#dadce0" stroke-width=".6"/><circle cx="502.36" cy="190.80" r="5.70" fill="#f3f3f3" stroke="#dadce0" stroke-width=".6"/><circle cx="515.78" cy="190.80" r="5.70" fill="#ffffff" stroke="#dadce0" stroke-width=".6"/><circle cx="395.00" cy="204.20" r="6.00" fill="#980000"/><circle cx="408.42" cy="204.20" r="6.00" fill="#ff0000"/><circle cx="421.84" cy="204.20" r="6.00" fill="#ff9900"/><circle cx="435.26" cy="204.20" r="6.00" fill="#ffff00"/><circle cx="448.68" cy="204.20" r="6.00" fill="#00ff00"/><circle cx="462.10" cy="204.20" r="6.00" fill="#00ffff"/><circle cx="475.52" cy="204.20" r="6.00" fill="#4a86e8"/><circle cx="488.94" cy="204.20" r="6.00" fill="#0000ff"/><circle cx="502.36" cy="204.20" r="6.00" fill="#9900ff"/><circle cx="515.78" cy="204.20" r="6.00" fill="#ff00ff"/><circle cx="395.00" cy="217.60" r="5.70" fill="#e6b8af" stroke="#dadce0" stroke-width=".6"/><circle cx="408.42" cy="217.60" r="5.70" fill="#f4cccc" stroke="#dadce0" stroke-width=".6"/><circle cx="421.84" cy="217.60" r="5.70" fill="#fce5cd" stroke="#dadce0" stroke-width=".6"/><circle cx="435.26" cy="217.60" r="5.70" fill="#fff2cc" stroke="#dadce0" stroke-width=".6"/><circle cx="448.68" cy="217.60" r="5.70" fill="#d9ead3" stroke="#dadce0" stroke-width=".6"/><circle cx="462.10" cy="217.60" r="5.70" fill="#d0e0e3" stroke="#dadce0" stroke-width=".6"/><circle cx="475.52" cy="217.60" r="5.70" fill="#c9daf8" stroke="#dadce0" stroke-width=".6"/><circle cx="488.94" cy="217.60" r="5.70" fill="#cfe2f3" stroke="#dadce0" stroke-width=".6"/><circle cx="502.36" cy="217.60" r="5.70" fill="#d9d2e9" stroke="#dadce0" stroke-width=".6"/><circle cx="515.78" cy="217.60" r="5.70" fill="#ead1dc" stroke="#dadce0" stroke-width=".6"/><circle cx="395.00" cy="231.00" r="6.00" fill="#dd7e6b"/><circle cx="408.42" cy="231.00" r="6.00" fill="#ea9999"/><circle cx="421.84" cy="231.00" r="6.00" fill="#f9cb9c"/><circle cx="435.26" cy="231.00" r="6.00" fill="#ffe599"/><circle cx="448.68" cy="231.00" r="6.00" fill="#b6d7a8"/><circle cx="462.10" cy="231.00" r="6.00" fill="#a2c4c9"/><circle cx="475.52" cy="231.00" r="6.00" fill="#a4c2f4"/><circle cx="488.94" cy="231.00" r="6.00" fill="#9fc5e8"/><circle cx="502.36" cy="231.00" r="6.00" fill="#b4a7d6"/><circle cx="515.78" cy="231.00" r="6.00" fill="#d5a6bd"/><circle cx="395.00" cy="244.40" r="6.00" fill="#cc4125"/><circle cx="408.42" cy="244.40" r="6.00" fill="#e06666"/><circle cx="421.84" cy="244.40" r="6.00" fill="#f6b26b"/><circle cx="435.26" cy="244.40" r="6.00" fill="#ffd966"/><circle cx="448.68" cy="244.40" r="6.00" fill="#93c47d"/><circle cx="462.10" cy="244.40" r="6.00" fill="#76a5af"/><circle cx="475.52" cy="244.40" r="6.00" fill="#6d9eeb"/><circle cx="488.94" cy="244.40" r="6.00" fill="#6fa8dc"/><circle cx="502.36" cy="244.40" r="6.00" fill="#8e7cc3"/><circle cx="515.78" cy="244.40" r="6.00" fill="#c27ba0"/><circle cx="395.00" cy="257.80" r="6.00" fill="#a61c00"/><circle cx="408.42" cy="257.80" r="6.00" fill="#cc0000"/><circle cx="421.84" cy="257.80" r="6.00" fill="#e69138"/><circle cx="435.26" cy="257.80" r="6.00" fill="#f1c232"/><circle cx="448.68" cy="257.80" r="6.00" fill="#6aa84f"/><circle cx="462.10" cy="257.80" r="6.00" fill="#45818e"/><circle cx="475.52" cy="257.80" r="6.00" fill="#3c78d8"/><circle cx="488.94" cy="257.80" r="6.00" fill="#3d85c6"/><circle cx="502.36" cy="257.80" r="6.00" fill="#674ea7"/><circle cx="515.78" cy="257.80" r="6.00" fill="#a64d79"/><circle cx="395.00" cy="271.20" r="6.00" fill="#85200c"/><circle cx="408.42" cy="271.20" r="6.00" fill="#990000"/><circle cx="421.84" cy="271.20" r="6.00" fill="#b45f06"/><circle cx="435.26" cy="271.20" r="6.00" fill="#bf9000"/><circle cx="448.68" cy="271.20" r="6.00" fill="#38761d"/><circle cx="462.10" cy="271.20" r="6.00" fill="#134f5c"/><circle cx="475.52" cy="271.20" r="6.00" fill="#1155cc"/><circle cx="488.94" cy="271.20" r="6.00" fill="#0b5394"/><circle cx="502.36" cy="271.20" r="6.00" fill="#351c75"/><circle cx="515.78" cy="271.20" r="6.00" fill="#741b47"/><circle cx="395.00" cy="284.60" r="6.00" fill="#5b0f00"/><circle cx="408.42" cy="284.60" r="6.00" fill="#660000"/><circle cx="421.84" cy="284.60" r="6.00" fill="#783f04"/><circle cx="435.26" cy="284.60" r="6.00" fill="#7f6000"/><circle cx="448.68" cy="284.60" r="6.00" fill="#274e13"/><circle cx="462.10" cy="284.60" r="6.00" fill="#0c343d"/><circle cx="475.52" cy="284.60" r="6.00" fill="#1c4587"/><circle cx="488.94" cy="284.60" r="6.00" fill="#073763"/><circle cx="502.36" cy="284.60" r="6.00" fill="#20124d"/><circle cx="515.78" cy="284.60" r="6.00" fill="#4c1130"/><path d="M433.4 306.9C431.7 309 430.7 310.6 430.7 312.2a2.7 2.7 0 0 0 5.4 0C436.1 310.6 435.1 309 433.4 306.9Z" fill="#2a2a2a"/><path d="M429.8 307.3l7.3 7.3" stroke="#fff" stroke-width="1.7"/><path d="M429.8 307.3l7.3 7.3" stroke="#2a2a2a" stroke-width="1"/></svg>
<svg class="ov" width="1024" height="463" viewBox="0 0 1024 463"><path d="M181.9 172.04L334.4 79.2L326.6 64.9L373.3 60.6L348.6 100.6L340.2 87L186.5 179.56Z" fill="#ff2a00"/></svg>
</body></html>
